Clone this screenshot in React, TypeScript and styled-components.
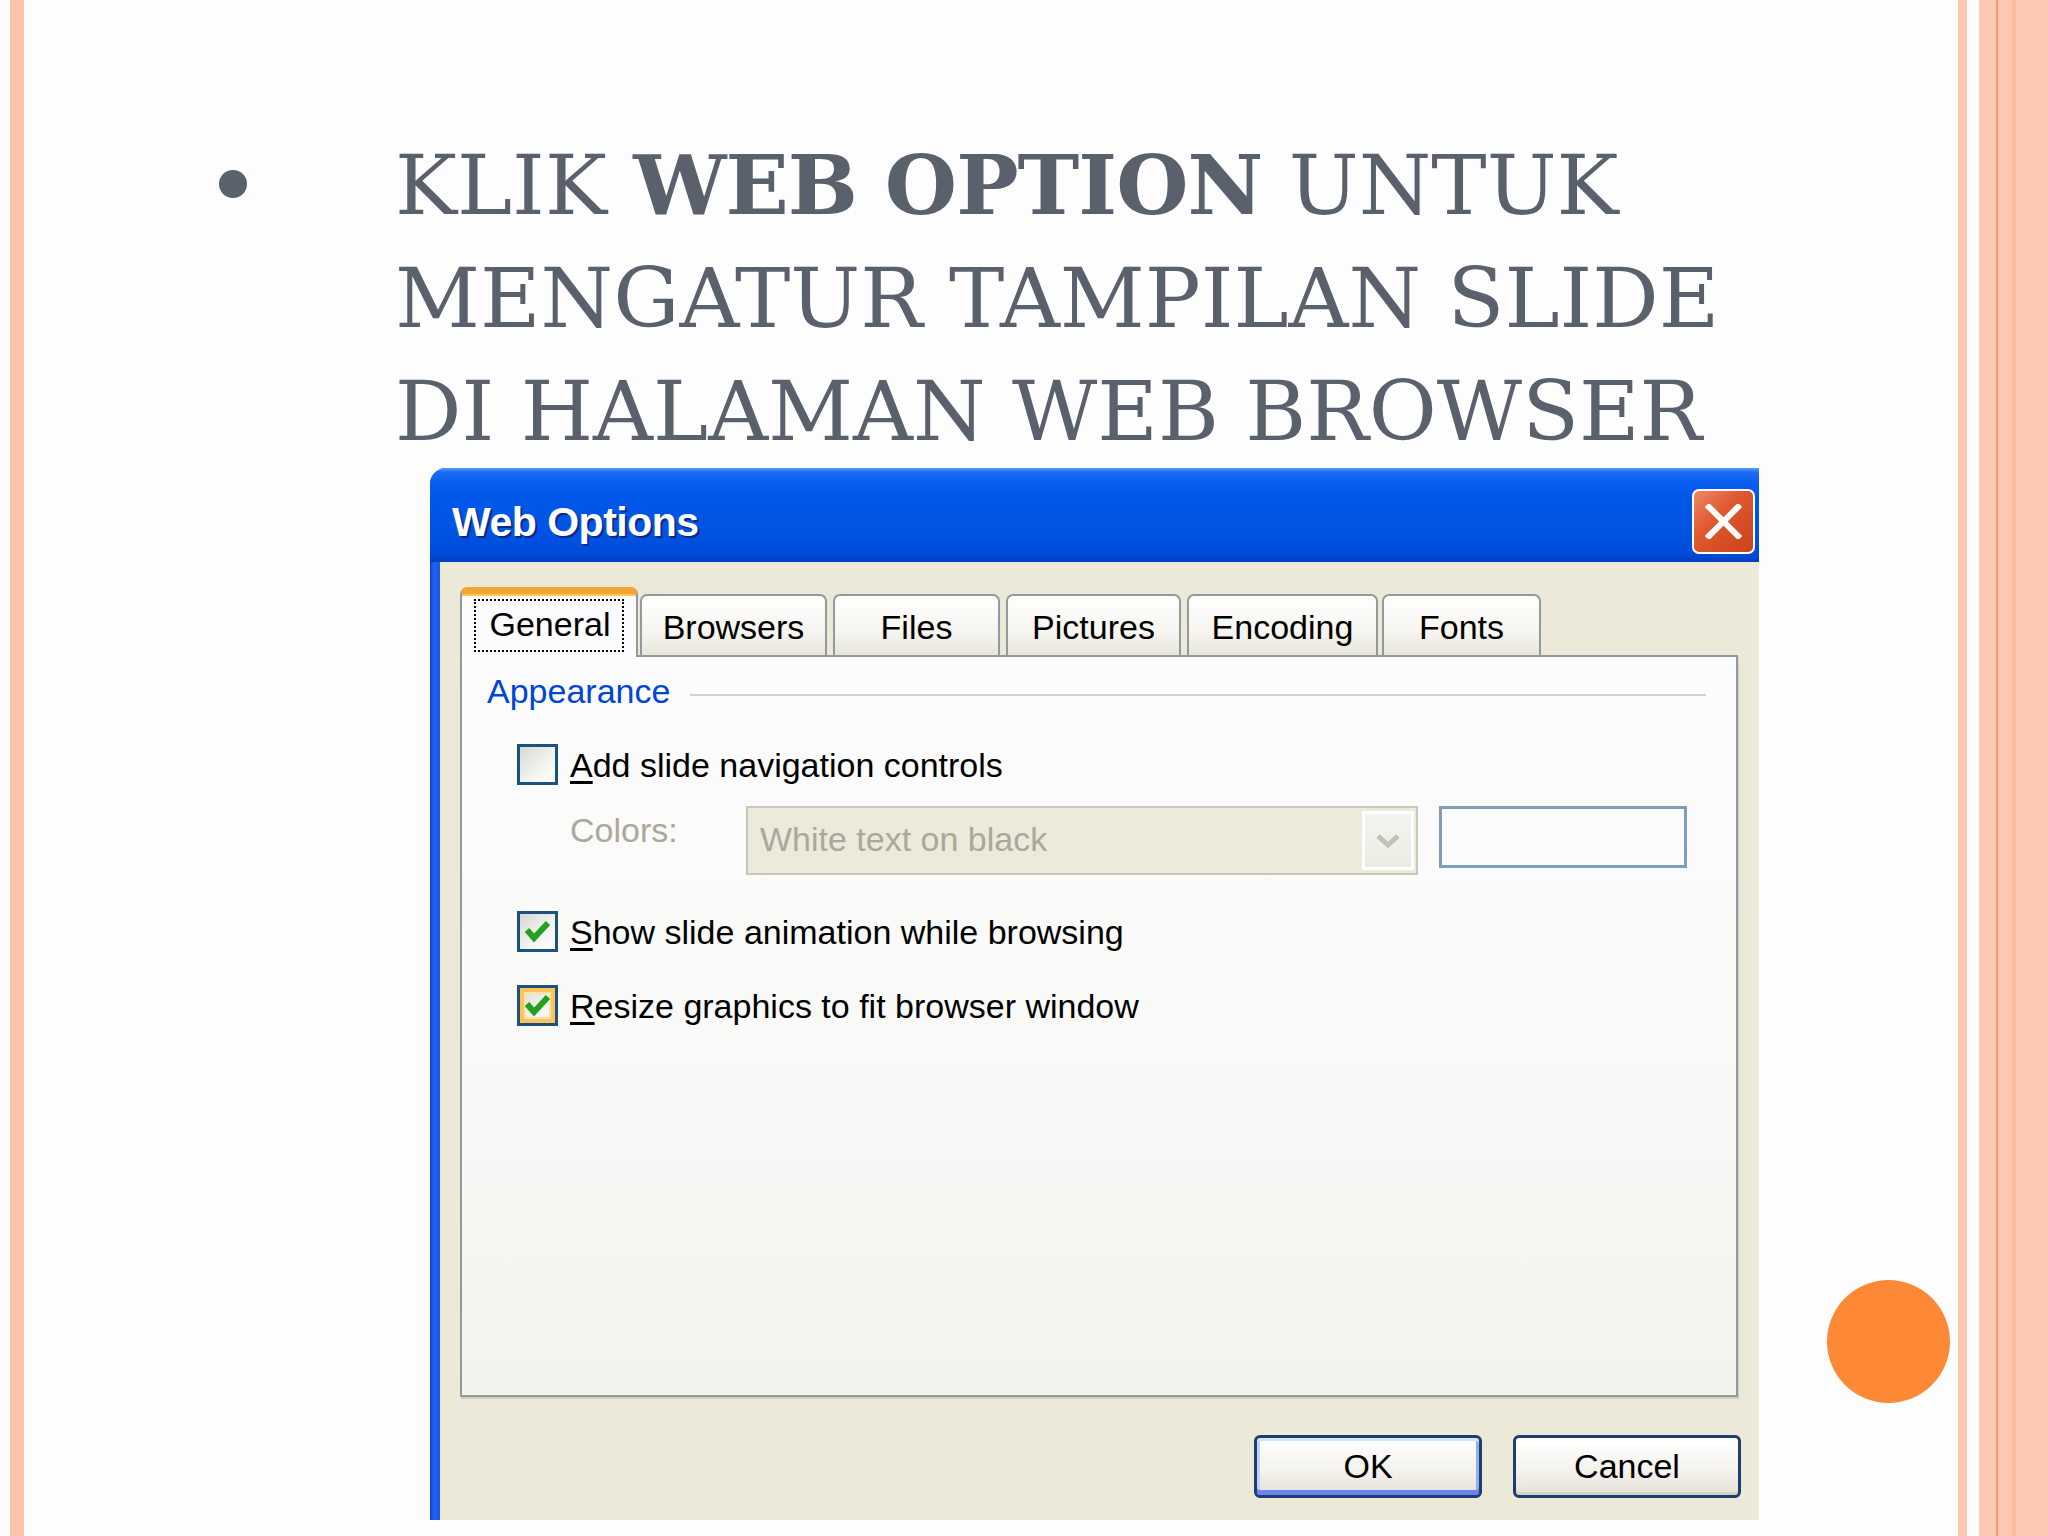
import React from 'react';
import styled, { createGlobalStyle } from 'styled-components';

const GlobalStyle = createGlobalStyle`
  html, body {
    margin: 0;
    padding: 0;
    background: #fdfdfd;
  }
  body {
    font-family: "Liberation Sans", Arial, sans-serif;
  }
`;

const tabs = [
  { label: 'General', w: 178, ml: 0 },
  { label: 'Browsers', w: 187, ml: 2 },
  { label: 'Files', w: 167, ml: 6 },
  { label: 'Pictures', w: 175, ml: 6 },
  { label: 'Encoding', w: 191, ml: 6 },
  { label: 'Fonts', w: 159, ml: 4 },
];

const rightStripes = [
  { w: 9, c: '#fcc7b1' },
  { w: 12, c: '#fdfdfd' },
  { w: 17, c: '#fdc8b2' },
  { w: 2, c: '#f99a68' },
  { w: 14, c: '#fdc8b2' },
  { w: 4, c: '#fbbb9f' },
  { w: 32, c: '#fdc8b2' },
];

function App() {
  return (
    <>
      <GlobalStyle />
      <Slide>
        <Stripe $w={10} $c='#fdfdfd' />
        <Stripe $w={14} $c='#f9c3ac' />

        <Main>
          <TitleRow>
            <Bullet />
            <Heading>
              KLIK <strong>WEB OPTION</strong> UNTUK
              <br />
              MENGATUR TAMPILAN SLIDE
              <br />
              DI HALAMAN WEB BROWSER
            </Heading>
          </TitleRow>

          <Dialog>
            <TitleBar>
              <WindowTitle>Web Options</WindowTitle>
              <CloseButton>
                <svg width='37' height='35' viewBox='0 0 37 35'>
                  <path
                    d='M4 3 L33 32 M33 3 L4 32'
                    stroke='#fff'
                    strokeWidth='6'
                    strokeLinecap='square'
                  />
                </svg>
              </CloseButton>
            </TitleBar>

            <Body>
              <TabStrip>
                {tabs.map((tab, index) => (
                  <Tab key={tab.label} $w={tab.w} $ml={tab.ml} $active={index === 0}>
                    {index === 0 ? <FocusRing>{tab.label}</FocusRing> : tab.label}
                  </Tab>
                ))}
              </TabStrip>

              <Panel>
                <GroupHeader>
                  <Legend>Appearance</Legend>
                  <Rule />
                </GroupHeader>

                <CheckRow $mt={33}>
                  <Box />
                  <Label>
                    <Key>A</Key>dd slide navigation controls
                  </Label>
                </CheckRow>

                <ColorsRow>
                  <ColorsLabel>Colors:</ColorsLabel>
                  <Combo>
                    <ComboText>White text on black</ComboText>
                    <DropButton>
                      <svg width='28' height='18' viewBox='0 0 28 18'>
                        <path
                          d='M4 4 L14 13 L24 4'
                          stroke='#c3c2b6'
                          strokeWidth='5'
                          fill='none'
                        />
                      </svg>
                    </DropButton>
                  </Combo>
                  <TextBox />
                </ColorsRow>

                <CheckRow $mt={36}>
                  <Box $checked>
                    <CheckMark />
                  </Box>
                  <Label>
                    <Key>S</Key>how slide animation while browsing
                  </Label>
                </CheckRow>

                <CheckRow $mt={33}>
                  <Box $checked $hover>
                    <CheckMark />
                  </Box>
                  <Label>
                    <Key>R</Key>esize graphics to fit browser window
                  </Label>
                </CheckRow>
              </Panel>

              <ButtonRow>
                <XpButton $default>OK</XpButton>
                <XpButton>Cancel</XpButton>
              </ButtonRow>
            </Body>
          </Dialog>
        </Main>

        {rightStripes.map((s, i) => (
          <Stripe key={i} $w={s.w} $c={s.c} />
        ))}

        <Dot />
      </Slide>
    </>
  );
}

function CheckMark() {
  return (
    <svg width='27' height='25' viewBox='0 0 27 25'>
      <path d='M3 11 L10 19 L24 4' stroke='#21a121' strokeWidth='6' fill='none' />
    </svg>
  );
}

export default App;

const Slide = styled.div`
  position: relative;
  display: flex;
  width: 2048px;
  height: 1536px;
  overflow: hidden;
  background: #fdfdfd;
`;

const Stripe = styled.div<{ $w: number; $c: string }>`
  flex: 0 0 ${(p) => p.$w}px;
  background: ${(p) => p.$c};
`;

const Main = styled.main`
  flex: 1;
  display: flex;
  flex-direction: column;
  padding-top: 129px;
`;

const TitleRow = styled.div`
  display: flex;
  align-items: flex-start;
  padding-left: 195px;
`;

const Bullet = styled.span`
  flex: 0 0 28px;
  height: 28px;
  margin-top: 41px;
  margin-right: 148px;
  border-radius: 50%;
  background: #5b606d;
`;

const Heading = styled.h1`
  margin: 0;
  font-family: "DejaVu Serif", "Liberation Serif", serif;
  font-size: 83px;
  font-weight: 400;
  line-height: 113px;
  color: #5b606d;
  white-space: nowrap;

  strong {
    font-weight: 700;
    letter-spacing: -1px;
  }
`;

const Dialog = styled.section`
  margin-left: 406px;
  width: 1329px;
  height: 1052px;
  display: flex;
  flex-direction: column;
  border-top-left-radius: 16px;
  overflow: hidden;
  background: linear-gradient(90deg, #0b44c8 0px, #2163f0 4px, #1a57e8 10px);
`;

const TitleBar = styled.header`
  flex: 0 0 94px;
  display: flex;
  align-items: center;
  padding-left: 22px;
  background: linear-gradient(
    180deg,
    #5a9cff 0px,
    #1f6cf5 4px,
    #0a5ff0 14px,
    #0057e8 30px,
    #0054e3 60px,
    #004cd8 86px,
    #003fc2 94px
  );
`;

const WindowTitle = styled.h2`
  margin: 14px 0 0;
  font-family: "Liberation Sans", Arial, sans-serif;
  font-size: 41px;
  font-weight: 700;
  letter-spacing: -0.5px;
  color: #ffffff;
  text-shadow: 2px 2px 0 #0a2a8a;
`;

const CloseButton = styled.span`
  margin-left: auto;
  margin-right: 4px;
  margin-top: 12px;
  width: 63px;
  height: 65px;
  box-sizing: border-box;
  display: flex;
  align-items: center;
  justify-content: center;
  border: 2px solid #ffffff;
  border-radius: 7px;
  background: linear-gradient(135deg, #ee8a6a 0%, #e0582f 40%, #c9431d 100%);
`;

const Body = styled.div`
  flex: 1;
  margin-left: 10px;
  display: flex;
  flex-direction: column;
  padding: 25px 21px 22px 20px;
  background: #ece9d8;
`;

const TabStrip = styled.div`
  display: flex;
  align-items: flex-end;
  position: relative;
  z-index: 1;
`;

const Tab = styled.div<{ $w: number; $ml: number; $active?: boolean }>`
  flex: 0 0 ${(p) => p.$w}px;
  margin-left: ${(p) => p.$ml}px;
  height: ${(p) => (p.$active ? 70 : 61)}px;
  margin-bottom: ${(p) => (p.$active ? -2 : 0)}px;
  box-sizing: border-box;
  display: flex;
  align-items: center;
  justify-content: center;
  padding-top: ${(p) => (p.$active ? 0 : 4)}px;
  border: 2px solid #919b9c;
  border-bottom: none;
  border-top: ${(p) => (p.$active ? '7px solid #f2a535' : '2px solid #919b9c')};
  border-radius: 7px 7px 0 0;
  background: ${(p) =>
    p.$active
      ? '#fcfcfe'
      : 'linear-gradient(180deg, #ffffff 0%, #f6f5f0 60%, #e8e6da 100%)'};
  box-shadow: ${(p) => (p.$active ? 'inset 0 2px 0 #ffc84c' : 'none')};
  font-size: 34px;
  color: #000000;
`;

const FocusRing = styled.span`
  display: flex;
  align-items: center;
  height: 53px;
  margin-top: 0;
  padding: 0 12px 2px 14px;
  box-sizing: border-box;
  border: 2px dotted #000000;
`;

const Panel = styled.div`
  height: 742px;
  box-sizing: border-box;
  padding: 14px 30px 0 25px;
  border: 2px solid #919b9c;
  background: linear-gradient(180deg, #fcfcfe 0%, #f9f9f7 50%, #f3f2ee 100%);
  box-shadow: 1px 2px 0 #d2cfc2;
`;

const GroupHeader = styled.div`
  display: flex;
  align-items: center;
  height: 40px;
  gap: 20px;
`;

const Legend = styled.span`
  font-size: 34px;
  line-height: 40px;
  color: #0046d5;
`;

const Rule = styled.span`
  flex: 1;
  height: 2px;
  margin-top: 8px;
  background: #d3d3c3;
`;

const CheckRow = styled.div<{ $mt: number }>`
  display: flex;
  align-items: center;
  height: 41px;
  margin-top: ${(p) => p.$mt}px;
  margin-left: 30px;
`;

const Box = styled.span<{ $checked?: boolean; $hover?: boolean }>`
  flex: 0 0 41px;
  height: 41px;
  box-sizing: border-box;
  display: flex;
  align-items: center;
  justify-content: center;
  margin-right: 12px;
  border: 3px solid #1c5180;
  background: linear-gradient(135deg, #d9d9d2 0%, #f2f2ee 55%, #ffffff 100%);
  box-shadow: ${(p) => (p.$hover ? 'inset 0 0 0 4px #fbc45a, inset 0 0 0 6px #fde3a6' : 'none')};
`;

const Label = styled.span`
  padding-top: 1px;
  font-size: 34px;
  line-height: 40px;
  color: #000000;
  white-space: nowrap;
`;

const Key = styled.span`
  text-decoration: underline;
  text-underline-offset: 4px;
  text-decoration-thickness: 3px;
`;

const ColorsRow = styled.div`
  display: flex;
  height: 69px;
  margin-top: 21px;
  padding-left: 83px;
`;

const ColorsLabel = styled.span`
  flex: 0 0 176px;
  margin-top: 4px;
  font-size: 34px;
  line-height: 40px;
  color: #aca899;
`;

const Combo = styled.div`
  flex: 0 0 672px;
  box-sizing: border-box;
  display: flex;
  align-items: center;
  padding-left: 12px;
  border: 2px solid #c9c7ba;
  background: #ebeadb;
`;

const ComboText = styled.span`
  padding-bottom: 2px;
  font-size: 34px;
  color: #aca899;
`;

const DropButton = styled.span`
  margin-left: auto;
  margin-right: 2px;
  width: 52px;
  height: 59px;
  box-sizing: border-box;
  display: flex;
  align-items: center;
  justify-content: center;
  border: 3px solid #ffffff;
  background: linear-gradient(180deg, #f4f3ee 0%, #ecebe4 100%);
`;

const TextBox = styled.span`
  flex: 0 0 248px;
  height: 62px;
  margin-left: 21px;
  box-sizing: border-box;
  border: 3px solid #7f9db9;
  background: #fbfbfb;
`;

const ButtonRow = styled.div`
  display: flex;
  justify-content: flex-end;
  gap: 31px;
  margin-top: 38px;
  margin-right: -3px;
`;

const XpButton = styled.button<{ $default?: boolean }>`
  width: 228px;
  height: 63px;
  box-sizing: border-box;
  padding: 0;
  border: 3px solid #1c3f70;
  border-radius: 6px;
  background: linear-gradient(180deg, #ffffff 0%, #f4f3ee 55%, #e4e2d6 100%);
  box-shadow: ${(p) =>
    p.$default
      ? 'inset 0 3px 0 #cee7ff, inset 0 -5px 0 #6d84ef, inset 3px 0 0 #bcd4f6, inset -3px 0 0 #8fb2ea'
      : 'inset 0 -3px 0 #d6d0c5'};
  font-family: "Liberation Sans", Arial, sans-serif;
  font-size: 34px;
  color: #000000;
`;

const Dot = styled.span`
  position: absolute;
  left: 1827px;
  top: 1280px;
  width: 123px;
  height: 123px;
  border-radius: 50%;
  background: #fd8937;
`;
